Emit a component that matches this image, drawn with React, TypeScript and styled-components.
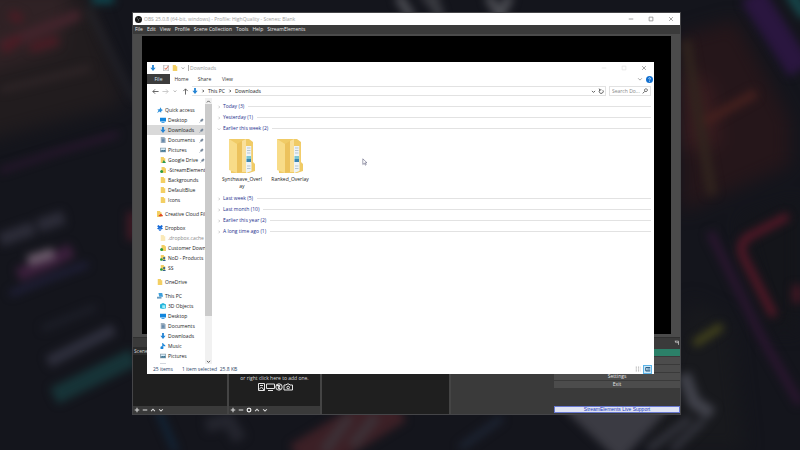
import React from "react";
import styled, { createGlobalStyle } from "styled-components";

const Global = createGlobalStyle`
  * { box-sizing: border-box; }
  body { margin: 0; background: #14151c; font: 5px/7px "Open Sans", "Noto Sans", sans-serif; }
  button, input { font: inherit; color: inherit; margin: 0; padding: 0; border: 0; background: none; }
  ul { list-style: none; margin: 0; padding: 0; }
  a { color: inherit; text-decoration: none; }
  svg { display: block; flex: none; }
`;

/* ---------- desktop ---------- */

const Desktop = styled.div`
  position: relative;
  display: flex;
  height: 100vh;
  min-height: 450px;
  padding: 12px 119px 35px 132px;
  overflow: hidden;
`;

const WallpaperSvg = styled.svg`
  position: absolute;
  inset: 0;
  width: 100%;
  height: 100%;
`;

function Wallpaper() {
  return (
    <WallpaperSvg viewBox="0 0 800 450" preserveAspectRatio="xMidYMid slice" aria-hidden="true">
      <defs>
        <filter id="soft" filterUnits="userSpaceOnUse" x="-40" y="-40" width="880" height="530" colorInterpolationFilters="sRGB"><feGaussianBlur stdDeviation="4" /></filter>
        <filter id="wide" filterUnits="userSpaceOnUse" x="-80" y="-80" width="960" height="610" colorInterpolationFilters="sRGB"><feGaussianBlur stdDeviation="9" /></filter>
      </defs>
      <rect width="800" height="450" fill="#14151c" />
      <g filter="url(#wide)">
        <path d="M-20-20H84L124 104-20 142z" fill="#211c1e" />
        <path d="M-20-10H70L60 50-20 75z" fill="#302225" />
        <path d="M682 35 736 20 790 120 790 165 682 212z" fill="#25161a" />
        <path d="M682 70 712 85 720 145 682 150z" fill="#391c1f" />
        <path d="M740 220 800 200V330L770 330z" fill="#14151a" />
        <path d="M690 300 730 320 745 450H640z" fill="#18191d" />
      </g>
      <g filter="url(#soft)" fill="none">
        <path d="M0 46 80 14" stroke="#43242c" strokeWidth="11" />
        <path d="M3 50 20 38M30 48 58 40M10 14 22 20" stroke="#4b1b24" strokeWidth="9" />
        <path d="M0 90 90 68" stroke="#302628" strokeWidth="6" />
        <path d="M88 8 134 100" stroke="#2d2e34" strokeWidth="3" />
        <path d="M92-1h22" stroke="#0e4a52" strokeWidth="9" />
        <path d="M0 171 60 151 118 134" stroke="#2b1730" strokeWidth="5" />
        <path d="M0 240 34 228M38 226 64 217" stroke="#2c2c38" strokeWidth="14" />
        <path d="M18 275 50 262 72 250" stroke="#3a1f3b" strokeWidth="14" />
        <path d="M28 261 54 253" stroke="#6a5a6a" strokeWidth="11" />
        <path d="M10 294 50 278 88 264" stroke="#20203a" strokeWidth="6" />
        <path d="M42 329 96 307" stroke="#1e202a" strokeWidth="6" />
        <path d="M48 362 114 329" stroke="#2e2f3c" strokeWidth="12" />
        <path d="M54 396 134 357" stroke="#173438" strokeWidth="18" />
        <path d="M132 212v28" stroke="#401a25" strokeWidth="10" />
        <path d="M398-4 412 18M430-4 440 16M488-4 500 16 510-4" stroke="#4c4d53" strokeWidth="9" />
        <path d="M418-6H440L438 18z" fill="#3a3b41" />
        <path d="M752-5 800 70" stroke="#2a163f" strokeWidth="26" />
        <path d="M790-8 806 16" stroke="#164448" strokeWidth="13" />
        <path d="M686 40 712 195" stroke="#30241e" strokeWidth="10" />
        <path d="M704 122 756 93" stroke="#44201e" strokeWidth="9" />
        <path d="M788 216 752 235Q736 242 744 258L774 316" stroke="#551827" strokeWidth="8" />
        <path d="M710 232 762 338 800 404" stroke="#2b1630" strokeWidth="8" />
        <path d="M694 344 722 326" stroke="#45451c" strokeWidth="8" />
        <path d="M797 285v18" stroke="#401724" strokeWidth="10" />
        <path d="M684 374 694 402 712 414" stroke="#41424b" strokeWidth="13" />
        <path d="M560 406 620 462 672 406z" fill="#3b3b43" />
        <path d="M648 450 690 418M672 450 704 420" stroke="#34353e" strokeWidth="7" />
        <path d="M300 462 396 404" stroke="#3c2026" strokeWidth="40" />
        <path d="M324 452 350 416M352 446 376 416" stroke="#3c3036" strokeWidth="11" />
        <path d="M206 426 228 420 240 440" stroke="#24252e" strokeWidth="14" />
        <path d="M158 410 176 452" stroke="#12263a" strokeWidth="6" />
        <path d="M460 448 502 418" stroke="#1d2534" strokeWidth="7" />
      </g>
    </WallpaperSvg>
  );
}

/* ---------- studio window ---------- */

const Studio = styled.main`
  position: relative;
  flex: 1;
  min-width: 0;
  display: flex;
  flex-direction: column;
  background: #3a3a3a;
  border: 1px solid #454548;
  color: #dcdcdc;
`;

const StudioTitle = styled.header`
  display: flex;
  align-items: center;
  gap: 2px;
  height: 12px;
  padding: 0 4px 0 2px;
  background: #fff;
  color: #a2a2a2;
`;

const Spacer = styled.span`
  flex: 1;
`;

const WindowButton = styled.button<{ $faint?: boolean }>`
  display: grid;
  place-items: center;
  width: 10px;
  height: 10px;
  margin-left: 10px;
  color: ${(p) => (p.$faint ? "#e2e2e2" : "#888")};
`;

const Menu = styled.nav`
  display: flex;
  align-items: center;
  gap: 4px;
  height: 9px;
  padding: 0 2px;
  color: #e8e8e8;
`;

const Preview = styled.section`
  flex: 1;
  min-height: 0;
  display: flex;
  padding: 2px 9px 3px;
  background: #4b4b4b;
`;

const Canvas = styled.div`
  flex: 1;
  background: #000;
`;

const DockTop = styled.div`
  display: flex;
  align-items: center;
  justify-content: flex-end;
  height: 10px;
  border-top: 1px solid #303030;
  color: #ccc;
`;

const Docks = styled.div`
  display: grid;
  grid-template-columns: 96fr 93fr 129fr 229fr;
  height: 67px;
`;

const Dock = styled.section`
  display: flex;
  flex-direction: column;
  min-width: 0;
  border-right: 2px solid #444;
  background: #1f1f1f;
`;

const DockTitle = styled.h2`
  margin: 0;
  height: 8px;
  padding-left: 1px;
  background: #2b2b2b;
  font: inherit;
  line-height: 9px;
`;

const DockBody = styled.div`
  flex: 1;
  display: flex;
  flex-direction: column;
  align-items: center;
  gap: 1px;
  padding-top: 20px;
  white-space: nowrap;
`;

const DockTools = styled.div`
  display: flex;
  align-items: center;
  gap: 1px;
  height: 8px;
  background: #3a3a3a;
`;

const ToolButton = styled.button`
  display: grid;
  place-items: center;
  width: 7px;
  height: 7px;
`;

const Controls = styled.section`
  display: flex;
  flex-direction: column;
  gap: 1px;
  padding: 2px 0 1px 45%;
`;

const ControlButton = styled.button<{ $active?: boolean }>`
  height: 7px;
  background: ${(p) => (p.$active ? "#2b8068" : "#4c4c4c")};
  color: #e4e4e4;
`;

const SupportButton = styled.button`
  height: 7px;
  margin-top: auto;
  background: #dfe3f3;
  border: 1px solid #6878d0;
  font: 5px/5px "Liberation Sans", Arial, sans-serif;
  color: #2439b8;
`;

/* ---------- file explorer window ---------- */

const Explorer = styled.section`
  position: absolute;
  inset: 62px 146px 76px 147px;
  display: flex;
  flex-direction: column;
  background: #fff;
  color: #222;
`;

const ExplorerTitle = styled.header`
  display: flex;
  align-items: center;
  height: 12px;
  padding: 0 5px 0 3px;
  color: #999;
`;

const QuickTools = styled.div`
  display: flex;
  align-items: center;
  gap: 3px;
  padding: 0 3px 0 7px;
`;

const TitleText = styled.span`
  padding-left: 1px;
  border-left: 1px solid #aaa;
  line-height: 6px;
`;

const WindowButtons = styled.div`
  display: flex;
`;

const Ribbon = styled.nav`
  display: flex;
  align-items: stretch;
  height: 10px;
  padding-right: 1px;
`;

const Tab = styled.button<{ $file?: boolean }>`
  width: 23px;
  background: ${(p) => (p.$file ? "#3c3c3c" : "transparent")};
  color: ${(p) => (p.$file ? "#dceaf8" : "#333")};
`;

const RibbonIcons = styled.div`
  display: flex;
  align-items: center;
  gap: 3px;
  color: #888;
`;

const AddressRow = styled.div`
  display: flex;
  align-items: center;
  gap: 3px;
  height: 14px;
  padding: 0 3px 0 4px;
`;

const Nav = styled.div`
  display: flex;
  gap: 2px;
`;

const NavButton = styled.button<{ $faint?: boolean }>`
  display: grid;
  place-items: center;
  width: 8px;
  height: 8px;
  color: ${(p) => (p.$faint ? "#c4c4c4" : "#555")};
`;

const Address = styled.div`
  flex: 1;
  display: flex;
  align-items: center;
  height: 10px;
  border: 1px solid #e2e2e2;
  border-left: 0;
`;

const Crumbs = styled.div`
  display: flex;
  align-items: center;
  gap: 3px;
`;

const Search = styled.label`
  display: flex;
  align-items: center;
  width: 42px;
  height: 10px;
  padding: 0 2px;
  border: 1px solid #e2e2e2;
  color: #555;

  input {
    flex: 1;
    min-width: 0;
    outline: 0;
  }
  input::placeholder {
    color: #888;
  }
`;

const Body = styled.div`
  flex: 1;
  min-height: 0;
  display: flex;
`;

const Sidebar = styled.nav`
  width: 58px;
  padding-top: 7px;
  overflow: hidden;
`;

const Group = styled.ul`
  margin-bottom: 4px;
`;

const Entry = styled.a<{ $depth: number; $selected?: boolean; $dim?: boolean }>`
  display: flex;
  align-items: center;
  gap: 2px;
  height: 10px;
  padding-left: ${(p) => (p.$depth ? 13 : 10)}px;
  background: ${(p) => (p.$selected ? "#d9d9d9" : "transparent")};
  color: ${(p) => (p.$dim ? "#8a8a8a" : "#222")};
  white-space: nowrap;
`;

const EntryText = styled.span`
  flex: 1;
`;

const PinMark = styled.span`
  padding-right: 1px;
  color: #6f8296;
`;

const Scrollbar = styled.div`
  display: flex;
  flex-direction: column;
  align-items: center;
  width: 7px;
  background: #f1f1f1;
  color: #555;
`;

const ScrollArrow = styled.button`
  display: grid;
  place-items: center;
  width: 7px;
  height: 6px;
`;

const Thumb = styled.div`
  width: 100%;
  flex: 210;
  background: #cbcbcb;
`;

const Track = styled.div`
  flex: 42;
`;

const Files = styled.div`
  flex: 1;
  min-width: 0;
  padding: 3px 3px 0 5px;
`;

const FileGroup = styled.button`
  display: flex;
  align-items: center;
  gap: 2px;
  width: 100%;
  height: 11px;
  color: #1d2f8c;
  white-space: nowrap;

  svg {
    color: #999;
  }
`;

const Rule = styled.span`
  flex: 1;
  height: 1px;
  margin-left: 2px;
  background: #e2e2e2;
`;

const Items = styled.div`
  display: flex;
  height: 59px;
  padding: 4px 0 0 1px;
`;

const Item = styled.button`
  display: flex;
  flex-direction: column;
  align-items: center;
  gap: 2px;
  width: 48px;
  padding: 0 4px;
  overflow-wrap: anywhere;
`;

const Status = styled.footer`
  display: flex;
  align-items: center;
  gap: 9px;
  height: 10px;
  padding: 0 2px 0 6px;
  color: #2b3f66;
`;

const Views = styled.div`
  display: flex;
  gap: 1px;
`;

const ViewButton = styled.button<{ $on?: boolean }>`
  display: grid;
  place-items: center;
  width: 9px;
  height: 9px;
  border: 1px solid ${(p) => (p.$on ? "#5bb4e8" : "transparent")};
  background: ${(p) => (p.$on ? "#cde8f8" : "transparent")};
  color: ${(p) => (p.$on ? "#2d5f86" : "#888")};
`;

const Pointer = styled.svg`
  position: absolute;
  left: 215px;
  top: 96px;
`;

/* ---------- icons ---------- */

const linePaths = {
  min: "M1 4h6",
  max: "M1.5 1.5h5v5h-5z",
  close: "M1.5 1.5l5 5M6.5 1.5l-5 5",
  left: "M7.5 4H1M3.5 1.5L1 4l2.5 2.5",
  right: "M.5 4H7M4.5 1.5L7 4 4.5 6.5",
  up: "M4 7.5V1M1.5 3.5L4 1l2.5 2.5",
  chevDown: "M1.5 3L4 5.5 6.5 3",
  chevUp: "M1.5 5.5L4 3l2.5 2.5",
  chevRight: "M3 1.5L5.5 4 3 6.5",
  plus: "M4 1v6M1 4h6",
  gear: "M2 2h4v4H2zM4 .5v1.5M4 6v1.5M.5 4H2M6 4h1.5",
  reload: "M6.5 3A2.7 2.7 0 1 1 2.5 2.5M1.5.8L2.5 2.8 4.5 2.3",
  search: "M5.2 1a1.900 1.900 0 1 0 .1 0M3.7 4.400L1 7.200",
  grid: "M1 1.5h1.500M4 1.500h1.500M1 4h1.500M4 4h1.500M1 6.500h1.500M4 6.500h1.500M7 1.500h.5M7 4h.5M7 6.500h.5",
  list: "M1 2h6M1 2v4.500M3 4h4M1 6.500h6",
  pop: "M1 1.500h5v5M3 3.500h3M2 1.500v2",
};

function Line({ name, size = 6, weight = 1 }: { name: keyof typeof linePaths; size?: number; weight?: number }) {
  return (
    <svg width={size} height={size} viewBox="0 0 8 8" fill="none" stroke="currentColor" strokeWidth={weight} aria-hidden="true">
      <path d={linePaths[name]} />
    </svg>
  );
}

function Pin() {
  return (
    <PinMark>
      <svg width="5" height="5" viewBox="0 0 8 8" fill="currentColor" aria-hidden="true">
        <path d="M4.800 .5L7.500 3.200 6.500 3.600 5.300 4.800 5 6.500 3.400 5 1 7.600.4 7 3 4.600 1.500 3 3.200 2.700 4.400 1.500z" />
      </svg>
    </PinMark>
  );
}

const pictures: Record<string, React.ReactNode> = {
  star: <path d="M0 8L2 5 .500 3.300 3.300 3 5 .300 5.800 3 8 4 5.800 5.200 5.500 7.800 3.500 6z" fill="#2b8fdb" />,
  monitor: <path d="M0 1h8v5H0zM2 7h4v1H2z" fill="#1286dd" />,
  down: <path d="M2.800 0h2.400v3.500H7.500L4 8 .5 3.500h2.300z" fill="#2484d4" />,
  doc: (
    <>
      <path d="M1 0h4.500L7.500 2v6H1z" fill="#9fb1c0" />
      <path d="M2.500 3h3.500M2.500 4.700h3.500M2.500 6.300h3.500" stroke="#3c6f9f" strokeWidth=".8" />
    </>
  ),
  picture: (
    <>
      <path d="M0 1h8v6H0z" fill="#8aa0ae" />
      <path d="M1 2h6v2H1z" fill="#d9eefa" />
      <path d="M1 6l2-2 1.500 1L6 3.700 7 5v1z" fill="#2d6f92" />
    </>
  ),
  folder: <path d="M1 0h4l.5 1.500H7V8H1z" fill="#f3cf63" />,
  paleFolder: <path d="M1 0h4l.5 1.500H7V8H1z" fill="#fae9b8" />,
  synced: (
    <>
      <path d="M2 0h4l.5 1.500H8V8H2z" fill="#f3cf63" />
      <circle cx="2.200" cy="6" r="2" fill="#2c9a3f" />
    </>
  ),
  drive: (
    <>
      <path d="M1 0h4l.5 1.500H7V8H1z" fill="#f3cf63" />
      <path d="M3 8l2-4 3 4z" fill="#279a52" />
    </>
  ),
  shared: (
    <>
      <path d="M1 0h4l.5 1.500H7V7H1z" fill="#f3cf63" />
      <circle cx="5.500" cy="4" r="1.500" fill="#31648e" />
      <path d="M3 8q2.500-4 5 0z" fill="#31648e" />
      <circle cx="1.800" cy="6" r="1.800" fill="#2c9a3f" />
    </>
  ),
  creative: (
    <>
      <path d="M0 0h4l.5 1.500H6V8H0z" fill="#f3cf63" />
      <path d="M2 7q0-2 1.800-2Q5 2.500 6.700 5 8 5.300 8 7z" fill="#df4a26" />
    </>
  ),
  dropbox: <path d="M2 0l2 1.500L6 0l2 1.500-2 1.600 2 1.600L6 6.100 4 4.700 2 6.100 0 4.700l2-1.600L0 1.500zM2.200 6.600L4 5.400l1.800 1.200L4 8z" fill="#1268d8" />,
  pc: (
    <>
      <path d="M2 0h5l1 5H3z" fill="#3da0dc" />
      <path d="M0 5h6v2.500H0z" fill="#6b9cc0" />
    </>
  ),
  cube: (
    <>
      <path d="M0 2l4-2 4 2v5L4 8 0 7z" fill="#24b5dc" />
      <path d="M3 3h4v4H3z" fill="#a4ecf6" />
    </>
  ),
  music: <path d="M3 0h1q.5 2 3 3v1.500L4.500 3.500V6A2 2 0 1 1 3 4.500z" fill="#1c86d8" />,
  video: <path d="M0 1h8v6H0z" fill="#4d5f7c" />,
  check: (
    <>
      <path d="M1 0h6v8H1z" fill="#fff" stroke="#8b8b8b" strokeWidth=".8" />
      <path d="M2.500 4l1.300 2L7 1.500" stroke="#d84a2a" fill="none" />
    </>
  ),
};

function Picture({ name, size = 6 }: { name: string; size?: number }) {
  return (
    <svg width={size} height={size} viewBox="0 0 8 8" aria-hidden="true">
      {pictures[name]}
    </svg>
  );
}

function BigFolder() {
  return (
    <svg width="28" height="36" viewBox="0 0 28 36" aria-hidden="true">
      <path d="M1 1H21L25 4V24L27 26V33L21 35H3z" fill="#f0cb66" />
      <path d="M1 1l8 5v29L1 32z" fill="#f8dc88" />
      <path d="M9 6l5-3v31l-5 1z" fill="#ecc25c" />
      <path d="M14 3l4-2v33h-4z" fill="#fae09a" />
      <path d="M18 8h5.500v25L18 35z" fill="#eef3f6" />
      <path d="M19 10h3.500M19 12.500h3.500M19 15h3.500M19 28h3.500M19 30.500h3.500" stroke="#b5c5d1" />
      <path d="M18.500 18h4.500v3h-4.500z" fill="#7cc6d2" />
      <path d="M18.500 21h4.500v3h-4.500z" fill="#3c86b0" />
      <path d="M23.500 5l1.500 1v20l-1.500-1z" fill="#f2cd6b" />
    </svg>
  );
}

function StudioLogo() {
  return (
    <svg width="7" height="7" viewBox="0 0 16 16" aria-hidden="true">
      <circle cx="8" cy="8" r="8" fill="#151515" />
      <path d="M5 3q-1 4 3 5M13 6q-4-1-5 2M6 13q4-1 2-5" stroke="#8c8c8c" strokeWidth="1.200" fill="none" />
    </svg>
  );
}

function SourceIcons() {
  return (
    <svg width="36" height="8" viewBox="0 0 36 8" fill="none" stroke="#e6e6e6" aria-hidden="true">
      <path d="M1.500 .5h6v7h-6zM2 6.500L4.500 4l2.500 3M3 2.500h3" />
      <path d="M9.500 1h8v4.500h-8zM11 7.500h5" />
      <circle cx="22" cy="4" r="3.200" />
      <path d="M19.500 2l3 1-1 2 2 1.500" strokeWidth="1.500" />
      <path d="M27 2h2l1-1h2l1 1h2.500v5H27z" />
      <circle cx="31.200" cy="4.500" r="1.300" />
    </svg>
  );
}

/* ---------- content ---------- */

type Row = { icon: string; label: string; pinned?: boolean; selected?: boolean; dim?: boolean; iconOnly?: boolean };

const tree: Row[][] = [
  [
    { icon: "star", label: "Quick access" },
    { icon: "monitor", label: "Desktop", pinned: true },
    { icon: "down", label: "Downloads", pinned: true, selected: true },
    { icon: "doc", label: "Documents", pinned: true },
    { icon: "picture", label: "Pictures", pinned: true },
    { icon: "drive", label: "Google Drive", pinned: true },
    { icon: "synced", label: "-StreamElement" },
    { icon: "folder", label: "Backgrounds" },
    { icon: "folder", label: "DefaultBlue" },
    { icon: "folder", label: "Icons" },
  ],
  [{ icon: "creative", label: "Creative Cloud File" }],
  [
    { icon: "dropbox", label: "Dropbox" },
    { icon: "paleFolder", label: ".dropbox.cache", dim: true },
    { icon: "synced", label: "Customer Down" },
    { icon: "shared", label: "NoD - Products" },
    { icon: "shared", label: "SS" },
  ],
  [{ icon: "folder", label: "OneDrive" }],
  [
    { icon: "pc", label: "This PC" },
    { icon: "cube", label: "3D Objects" },
    { icon: "monitor", label: "Desktop" },
    { icon: "doc", label: "Documents" },
    { icon: "down", label: "Downloads" },
    { icon: "music", label: "Music" },
    { icon: "picture", label: "Pictures" },
    { icon: "video", label: "Videos", iconOnly: true },
  ],
];

const menus = ["File", "Edit", "View", "Profile", "Scene Collection", "Tools", "Help", "StreamElements"];

function WindowControls({ muted }: { muted?: boolean }) {
  return (
    <WindowButtons>
      <WindowButton aria-label="Minimize" $faint={muted}><Line name="min" /></WindowButton>
      <WindowButton aria-label="Maximize" $faint={muted}><Line name="max" /></WindowButton>
      <WindowButton aria-label="Close"><Line name="close" /></WindowButton>
    </WindowButtons>
  );
}

function GroupHeader({ label, open }: { label: string; open?: boolean }) {
  return (
    <FileGroup aria-expanded={!!open}>
      <Line name={open ? "chevDown" : "chevRight"} size={4} />
      {label}
      <Rule />
    </FileGroup>
  );
}

function Tools({ gear }: { gear?: boolean }) {
  return (
    <DockTools>
      <ToolButton aria-label="Add"><Line name="plus" weight={1.4} /></ToolButton>
      <ToolButton aria-label="Remove"><Line name="min" weight={1.4} /></ToolButton>
      {gear && <ToolButton aria-label="Properties"><Line name="gear" weight={1.4} /></ToolButton>}
      <ToolButton aria-label="Move up"><Line name="chevUp" weight={1.4} /></ToolButton>
      <ToolButton aria-label="Move down"><Line name="chevDown" weight={1.4} /></ToolButton>
    </DockTools>
  );
}

function StudioWindow() {
  return (
    <Studio>
      <StudioTitle>
        <StudioLogo />
        <span>OBS 25.0.8 (64-bit, windows) - Profile: HighQuality - Scenes: Blank</span>
        <Spacer />
        <WindowControls />
      </StudioTitle>
      <Menu aria-label="Main menu">
        {menus.map((m) => <button key={m}>{m}</button>)}
      </Menu>
      <Preview><Canvas /></Preview>
      <DockTop><Line name="pop" /></DockTop>
      <Docks>
        <Dock>
          <DockTitle>Scenes</DockTitle>
          <DockBody />
          <Tools />
        </Dock>
        <Dock>
          <DockTitle />
          <DockBody>
            <span>or right click here to add one.</span>
            <SourceIcons />
          </DockBody>
          <Tools gear />
        </Dock>
        <Dock />
        <Controls>
          <ControlButton $active aria-label="Start Streaming" />
          <ControlButton aria-label="Start Recording" />
          <ControlButton aria-label="Studio Mode" />
          <ControlButton>Settings</ControlButton>
          <ControlButton>Exit</ControlButton>
          <SupportButton>StreamElements Live Support</SupportButton>
        </Controls>
      </Docks>
    </Studio>
  );
}

function ExplorerWindow() {
  return (
    <Explorer aria-label="Downloads">
      <ExplorerTitle>
        <Picture name="down" />
        <QuickTools>
          <Picture name="check" />
          <Picture name="folder" />
          <Line name="chevDown" size={4} weight={2} />
        </QuickTools>
        <TitleText>Downloads</TitleText>
        <Spacer />
        <WindowControls muted />
      </ExplorerTitle>
      <Ribbon>
        <Tab $file>File</Tab>
        <Tab>Home</Tab>
        <Tab>Share</Tab>
        <Tab>View</Tab>
        <Spacer />
        <RibbonIcons>
          <Line name="chevDown" />
          <svg width="7" height="7" viewBox="0 0 8 8" aria-hidden="true">
            <circle cx="4" cy="4" r="4" fill="#0f6fd0" />
            <path d="M3 3q0-1 1-1t1 1-1 1.500M4 5.500v1" stroke="#fff" strokeWidth=".8" fill="none" />
          </svg>
        </RibbonIcons>
      </Ribbon>
      <AddressRow>
        <Nav>
          <NavButton aria-label="Back"><Line name="left" size={7} /></NavButton>
          <NavButton aria-label="Forward" $faint><Line name="right" size={7} /></NavButton>
          <NavButton aria-label="Recent locations"><Line name="chevDown" size={4} /></NavButton>
          <NavButton aria-label="Up"><Line name="up" size={7} /></NavButton>
        </Nav>
        <Address>
          <Crumbs>
            <Picture name="down" />
            <Line name="chevRight" size={4} weight={1.6} />
            <button>This PC</button>
            <Line name="chevRight" size={4} weight={1.6} />
            <button>Downloads</button>
          </Crumbs>
          <Spacer />
          <NavButton aria-label="Previous locations"><Line name="chevDown" size={5} weight={1.5} /></NavButton>
          <NavButton aria-label="Refresh"><Line name="reload" size={6} weight={1.2} /></NavButton>
        </Address>
        <Search>
          <input aria-label="Search Downloads" placeholder="Search Do..." />
          <Line name="search" weight={1.2} />
        </Search>
      </AddressRow>
      <Body>
        <Sidebar aria-label="Folders">
          {tree.map((rows, g) => (
            <Group key={g}>
              {rows.map((r, i) => (
                <li key={r.label}>
                  <Entry href="#" aria-label={r.label} $depth={i ? 1 : 0} $selected={r.selected} $dim={r.dim}>
                    <Picture name={r.icon} />
                    {!r.iconOnly && <EntryText>{r.label}</EntryText>}
                    {r.pinned && <Pin />}
                  </Entry>
                </li>
              ))}
            </Group>
          ))}
        </Sidebar>
        <Scrollbar>
          <ScrollArrow aria-label="Scroll up"><Line name="chevUp" size={5} weight={1.5} /></ScrollArrow>
          <Thumb />
          <Track />
          <ScrollArrow aria-label="Scroll down"><Line name="chevDown" size={5} weight={1.5} /></ScrollArrow>
        </Scrollbar>
        <Files>
          <GroupHeader label="Today (3)" />
          <GroupHeader label="Yesterday (1)" />
          <GroupHeader label="Earlier this week (2)" open />
          <Items>
            <Item><BigFolder />Synthwave_Overlay</Item>
            <Item><BigFolder />Ranked_Overlay</Item>
          </Items>
          <GroupHeader label="Last week (5)" />
          <GroupHeader label="Last month (10)" />
          <GroupHeader label="Earlier this year (2)" />
          <GroupHeader label="A long time ago (1)" />
        </Files>
      </Body>
      <Status>
        <span>25 items</span>
        <span>1 item selected&nbsp; 25.8 KB</span>
        <Spacer />
        <Views>
          <ViewButton aria-label="Details view"><Line name="grid" /></ViewButton>
          <ViewButton aria-label="Large icons view" $on><Line name="list" weight={1.4} /></ViewButton>
        </Views>
      </Status>
      <Pointer width="6" height="8" viewBox="0 0 6 8" aria-hidden="true">
        <path d="M.8.8v5.700L2.300 5.200l1 2 .9-.5-1-1.900H5z" fill="#fff" stroke="#446" strokeWidth=".5" />
      </Pointer>
    </Explorer>
  );
}

export default function App() {
  return (
    <>
      <Global />
      <Desktop>
        <Wallpaper />
        <StudioWindow />
        <ExplorerWindow />
      </Desktop>
    </>
  );
}
